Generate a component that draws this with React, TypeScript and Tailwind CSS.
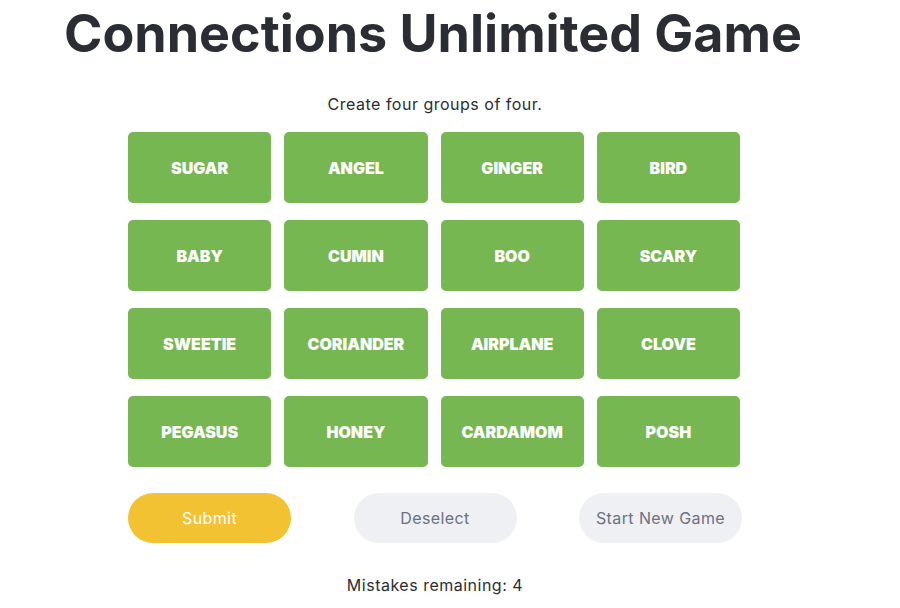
const words = [
  'SUGAR', 'ANGEL', 'GINGER', 'BIRD',
  'BABY', 'CUMIN', 'BOO', 'SCARY',
  'SWEETIE', 'CORIANDER', 'AIRPLANE', 'CLOVE',
  'PEGASUS', 'HONEY', 'CARDAMOM', 'POSH',
];

export default function App() {
  return (
    <div className="min-h-[608px] w-[900px] bg-white font-['Inter',sans-serif]">
      <h1 className="pl-[64px] pt-[4px] text-[52px] font-bold leading-[60px] text-[#2a2d34]">
        Connections Unlimited Game
      </h1>
      <p className="mt-[30px] w-[870px] text-center text-[16px] leading-5 tracking-[0.5px] text-[#2a2d34]">
        Create four groups of four.
      </p>
      <div className="ml-[128px] mt-[18px] grid w-[612px] grid-cols-4 gap-x-[13px] gap-y-[17px]">
        {words.map((word) => (
          <button
            key={word}
            className="flex h-[71px] items-center justify-center rounded-[5px] bg-[#77b752] text-[16px] font-black text-white"
          >
            {word}
          </button>
        ))}
      </div>
      <div className="ml-[128px] mt-[26px] flex w-[614px] justify-between text-[16px] tracking-[0.4px]">
        <button className="h-[50px] w-[163px] rounded-full bg-[#f2c232] text-white">
          Submit
        </button>
        <button className="h-[50px] w-[163px] rounded-full bg-[#eef0f4] text-[#6b7280]">
          Deselect
        </button>
        <button className="h-[50px] w-[163px] rounded-full bg-[#eef0f4] text-[#6b7280]">
          Start New Game
        </button>
      </div>
      <p className="mt-[32px] w-[870px] text-center text-[16px] leading-5 tracking-[0.5px] text-[#2a2d34]">
        Mistakes remaining: 4
      </p>
    </div>
  );
}
